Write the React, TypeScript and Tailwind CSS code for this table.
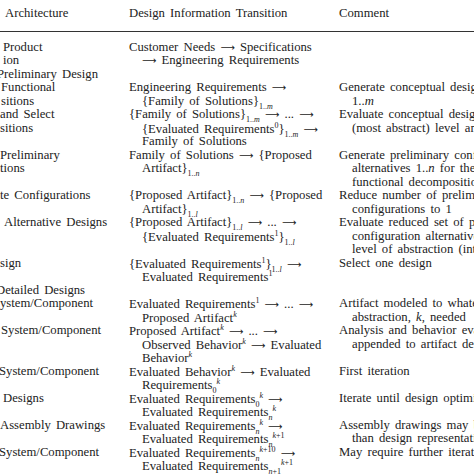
import React from 'react'

type Row = {
  a?: React.ReactNode[]
  ax?: string
  b?: React.ReactNode[]
  c?: React.ReactNode[]
}

const Sub = ({ children }: { children: React.ReactNode }) => (
  <span className="align-sub text-[8px] leading-none">{children}</span>
)

const Sup = ({ children }: { children: React.ReactNode }) => (
  <span className="align-super text-[8px] leading-none">{children}</span>
)

const Range = ({ v }: { v: string }) => (
  <Sub>
    1..<i>{v}</i>
  </Sub>
)

const K = ({ extra }: { extra?: string }) => (
  <Sup>
    <i>k</i>
    {extra}
  </Sup>
)

const A = () => <span className="font-['DejaVu_Sans'] text-[10px]">⟶</span>

const N = () => (
  <Sub>
    <i>n</i>
  </Sub>
)

const rows: Row[] = [
  {
    a: ['Product', 'ion'],
    ax: 'pl-[3px]',
    b: [
      <>
        Customer Needs <A /> Specifications
      </>,
      <>
        <A /> Engineering Requirements
      </>,
    ],
  },
  { a: ['Preliminary Design'], ax: '-ml-[3px]' },
  {
    a: ['Functional', 'sitions'],
    ax: 'pl-[1px]',
    b: [
      <>
        Engineering Requirements <A />
      </>,
      <>
        {'{Family of Solutions}'}
        <Range v="m" />
      </>,
    ],
    c: [
      'Generate conceptual designs',
      <>
        1..<i>m</i>
      </>,
    ],
  },
  {
    a: ['and Select', 'sitions'],
    b: [
      <>
        {'{Family of Solutions}'}
        <Range v="m" /> <A /> ... <A />
      </>,
      <>
        {'{Evaluated Requirements'}
        <Sup>0</Sup>
        {'}'}
        <Range v="m" /> <A />
      </>,
      'Family of Solutions',
    ],
    c: ['Evaluate conceptual designs at highest', '(most abstract) level and select'],
  },
  {
    a: ['Preliminary', 'tions'],
    b: [
      <>
        Family of Solutions <A /> {'{Proposed'}
      </>,
      <>
        {'Artifact}'}
        <Range v="n" />
      </>,
    ],
    c: [
      'Generate preliminary configuration',
      <>
        alternatives 1..<i>n</i> for the selected
      </>,
      'functional decomposition',
    ],
  },
  {
    a: ['te Configurations'],
    b: [
      <>
        {'{Proposed Artifact}'}
        <Range v="n" /> <A /> {'{Proposed'}
      </>,
      <>
        {'Artifact}'}
        <Range v="l" />
      </>,
    ],
    c: ['Reduce number of preliminary', 'configurations to 1'],
  },
  {
    a: ['Alternative Designs'],
    ax: 'pl-[4px]',
    b: [
      <>
        {'{Proposed Artifact}'}
        <Range v="l" /> <A /> ... <A />
      </>,
      <>
        {'{Evaluated Requirements'}
        <Sup>1</Sup>
        {'}'}
        <Range v="l" />
      </>,
    ],
    c: [
      'Evaluate reduced set of preliminary',
      'configuration alternatives at next',
      'level of abstraction (intermediate)',
    ],
  },
  {
    a: ['sign'],
    b: [
      <>
        {'{Evaluated Requirements'}
        <Sup>1</Sup>
        {'}'}
        <Range v="l" /> <A />
      </>,
      <>
        Evaluated Requirements<Sup>1</Sup>
      </>,
    ],
    c: ['Select one design'],
  },
  { a: ['Detailed Designs'], ax: '-ml-[4px]' },
  {
    a: ['ystem/Component'],
    b: [
      <>
        Evaluated Requirements<Sup>1</Sup> <A /> ... <A />
      </>,
      <>
        Proposed Artifact<K />
      </>,
    ],
    c: [
      'Artifact modeled to whatever level of',
      <>
        abstraction, <i>k</i>, needed
      </>,
    ],
  },
  {
    a: ['System/Component'],
    ax: 'pl-[1px]',
    b: [
      <>
        Proposed Artifact<K /> <A /> ... <A />
      </>,
      <>
        Observed Behavior<K /> <A /> Evaluated
      </>,
      <>
        Behavior<K />
      </>,
    ],
    c: ['Analysis and behavior evaluation', 'appended to artifact description'],
  },
  {
    a: ['System/Component'],
    ax: '-ml-[1px]',
    b: [
      <>
        Evaluated Behavior<K /> <A /> Evaluated
      </>,
      <>
        Requirements<Sub>0</Sub>
        <K />
      </>,
    ],
    c: ['First iteration'],
  },
  {
    a: ['Designs'],
    ax: 'pl-[3px]',
    b: [
      <>
        Evaluated Requirements<Sub>0</Sub>
        <K /> <A />
      </>,
      <>
        Evaluated Requirements
        <N />
        <K />
      </>,
    ],
    c: ['Iterate until design optimized'],
  },
  {
    a: ['Assembly Drawings'],
    b: [
      <>
        Evaluated Requirements
        <N />
        <K /> <A />
      </>,
      <>
        Evaluated Requirements
        <N />
        <K extra="+1" />
      </>,
    ],
    c: ['Assembly drawings may be less', 'than design representation'],
  },
  {
    a: ['System/Component'],
    ax: '-ml-[1px]',
    b: [
      <>
        Evaluated Requirements
        <N />
        <K extra="+10" /> <A />
      </>,
      <>
        Evaluated Requirements
        <Sub>
          <i>n</i>+1
        </Sub>
        <K extra="+1" />
      </>,
    ],
    c: ['May require further iteration'],
  },
]

function Cell({ lines, className = '' }: { lines?: React.ReactNode[]; className?: string }) {
  return (
    <div className={`flex flex-col ${className}`}>
      {(lines ?? []).map((l, i) => (
        <div key={i} className={`h-[13.5px] whitespace-nowrap ${i > 0 ? 'pl-[13px]' : ''}`}>
          {l}
        </div>
      ))}
    </div>
  )
}

export default function App() {
  return (
    <div
      className="h-[474px] w-[474px] overflow-hidden bg-white text-[12.7px] leading-[13.5px] text-[#222] [word-spacing:2px]"
      style={{ fontFamily: '"Liberation Serif", "Times New Roman", serif' }}
    >
      {/* header */}
      <div className="grid grid-cols-[129px_210px_1fr] border-b-[1.5px] border-[#333] pb-[10px] pt-[7px]">
        <div className="whitespace-nowrap pl-[5px]">Architecture</div>
        <div className="whitespace-nowrap">Design Information Transition</div>
        <div className="whitespace-nowrap">Comment</div>
      </div>

      {/* body */}
      <div className="flex flex-col pt-[9px]">
        {rows.map((r, i) => (
          <div key={i} className="grid grid-cols-[129px_210px_1fr]">
            <div className={`flex flex-col ${r.ax ?? ''}`}>
              {(r.a ?? []).map((t, j) => (
                <div key={j} className="h-[13.5px] whitespace-nowrap">
                  {t}
                </div>
              ))}
            </div>
            <Cell lines={r.b} />
            <Cell lines={r.c} />
          </div>
        ))}
      </div>
    </div>
  )
}
